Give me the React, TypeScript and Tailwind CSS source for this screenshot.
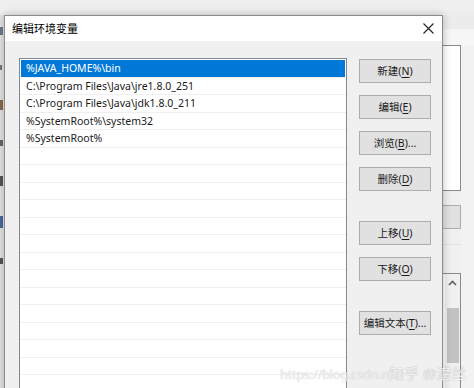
import React from "react";

const font = { fontFamily: '"Noto Sans", "Noto Sans CJK SC", sans-serif' };

function Btn({ label, k, suffix = "" }: { label: string; k: string; suffix?: string }) {
  return (
    <div className="h-[24px] w-[72px] border border-[#adadad] bg-[#e1e1e1] flex items-center justify-center text-[10.5px] text-[#1a1a1a] leading-none whitespace-nowrap">
      <span>
        {label}(<span className="underline underline-offset-2">{k}</span>){suffix}
      </span>
    </div>
  );
}

export default function App() {
  const items = [
    "%JAVA_HOME%\\bin",
    "C:\\Program Files\\Java\\jre1.8.0_251",
    "C:\\Program Files\\Java\\jdk1.8.0_211",
    "%SystemRoot%\\system32",
    "%SystemRoot%",
  ];
  const rows = Array.from({ length: 19 }, (_, i) => items[i] ?? "");
  return (
    <div className="relative w-[474px] h-[388px] overflow-hidden bg-[#f0f0f0]" style={font}>
      {/* background window behind the dialog */}
      <div className="absolute inset-0 flex flex-col">
        <div className="h-[15px] bg-[#efefef] shrink-0" />
        <div className="flex flex-1">
          <div className="w-[4px] bg-[#e4e4e4] flex flex-col pt-[12px] gap-[30px]">
            <div className="w-[3px] h-[8px] bg-[#6b7a90]" />
            <div className="w-[2px] h-[5px] bg-[#777]" />
            <div className="w-[3px] h-[10px] bg-[#8a6a4a]" />
            <div className="w-[3px] h-[6px] bg-[#666]" />
            <div className="w-[3px] h-[10px] bg-[#555]" />
            <div className="w-[3px] h-[12px] bg-[#4a6a9a]" />
            <div className="w-[3px] h-[6px] bg-[#555]" />
          </div>
          <div className="flex-1" />
          <div className="w-[54px] flex flex-col">
            <div className="h-[14px] bg-[#ececec]" />
            <div className="h-[16px] bg-[#f6f6f6]" />
            <div className="flex">
              <div className="w-[41px] flex flex-col">
                <div className="h-[146px] bg-white border border-[#8a8a8a]" />
                <div className="mt-[14px] h-[24px] bg-[#e1e1e1] border border-[#adadad]" />
                <div className="mt-[15px] h-[1px] bg-[#e2e2e2]" />
                <div className="mt-[28px] h-[130px] bg-white border border-[#8a8a8a] flex justify-end">
                  <div className="w-[15px] bg-[#f0f0f0] flex flex-col items-center pt-[6px]">
                    <svg width="9" height="6" viewBox="0 0 9 6">
                      <path d="M1 5 L4.5 1.5 L8 5" stroke="#606060" strokeWidth="1.6" fill="none" />
                    </svg>
                    <div className="mt-[22px] w-[12px] h-[55px] bg-[#c2c2c2]" />
                  </div>
                </div>
              </div>
              <div className="flex-1 bg-[#f2f2f2]" />
            </div>
          </div>
        </div>
      </div>

      {/* dialog */}
      <div className="absolute left-[4px] top-[15px] w-[439px] h-[390px] border border-[#8c8c8c] bg-[#f0f0f0] shadow-[0_0_8px_rgba(0,0,0,0.25)] flex flex-col">
        <div className="h-[25px] bg-white flex items-center justify-between pl-[7px] pr-[7px] shrink-0">
          <span className="text-[11px] text-black leading-none">编辑环境变量</span>
          <svg width="11" height="11" viewBox="0 0 11 11" className="mr-[1px]">
            <path d="M0.5 0.5 L10.5 10.5 M10.5 0.5 L0.5 10.5" stroke="#222" strokeWidth="1.1" />
          </svg>
        </div>
        <div className="flex pl-[14px] pt-[17px]">
          <div className="w-[328px] h-[340px] bg-white border border-[#828790] pt-[1px] overflow-hidden">
            {rows.map((t, i) => (
              <div
                key={i}
                className={
                  "h-[17.5px] flex items-center text-[10.5px] leading-none border-b border-[#efefef] whitespace-nowrap " +
                  (i === 0 ? "bg-[#0078d7] text-white mx-[1px] pl-[5px]" : "text-[#1a1a1a] pl-[6px]")
                }
              >
                {t}
              </div>
            ))}
          </div>
          <div className="ml-[12px] pt-[1px] flex flex-col">
            <div className="flex flex-col gap-[12px]">
              <Btn label="新建" k="N" />
              <Btn label="编辑" k="E" />
              <Btn label="浏览" k="B" suffix="..." />
              <Btn label="删除" k="D" />
            </div>
            <div className="mt-[30px] flex flex-col gap-[12px]">
              <Btn label="上移" k="U" />
              <Btn label="下移" k="O" />
            </div>
            <div className="mt-[30px]">
              <Btn label="编辑文本" k="T" suffix="..." />
            </div>
          </div>
        </div>
      </div>

      {/* watermark */}
      <div className="absolute left-[280px] top-[365px] text-[13px] text-white/80 [text-shadow:0_0_1px_rgba(0,0,0,0.3)] tracking-tight whitespace-nowrap">
        https://blog.csdn.n
      </div>
      <div className="absolute left-[389px] top-[362px] text-[15px] text-white/85 [text-shadow:0_0_1px_rgba(0,0,0,0.4)] whitespace-nowrap">
        知乎 @潜丝
      </div>
    </div>
  );
}
